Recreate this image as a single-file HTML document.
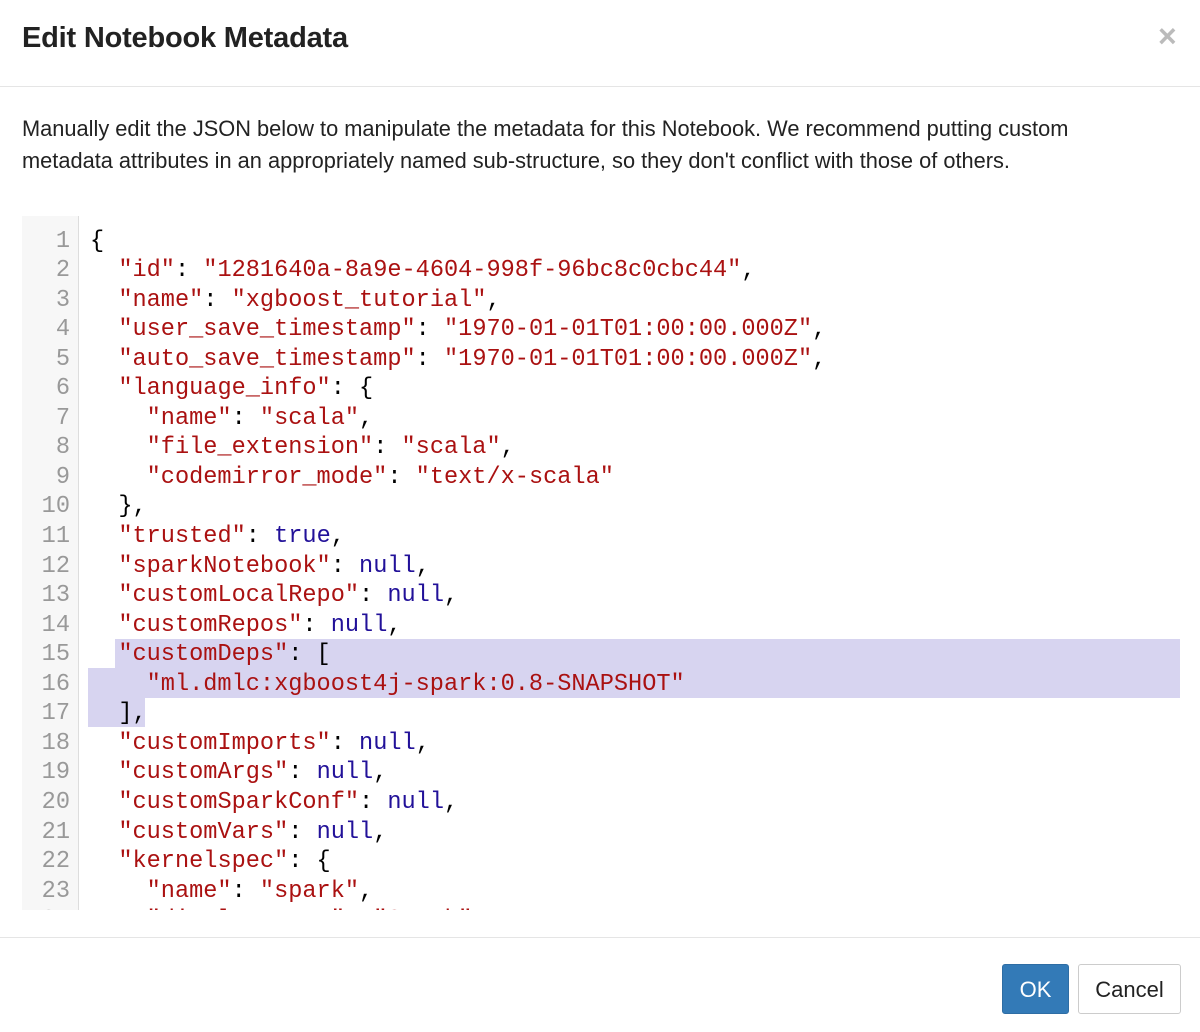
<!DOCTYPE html>
<html><head><style>
body{margin:0;width:1200px;height:1032px;background:#fff;position:relative;overflow:hidden;font-family:"Liberation Sans",sans-serif;color:#333}
.t{position:absolute;left:22px;top:22px;font-size:29px;font-weight:bold;color:#222;margin:0;letter-spacing:-0.2px}
.x{position:absolute;left:1158px;top:18px;font-size:32px;font-weight:bold;color:#bbb}
.hr{position:absolute;left:0;width:1200px;height:1px;background:#e5e5e5}
.p{position:absolute;left:22px;top:113px;font-size:21.8px;line-height:31.5px;color:#222;width:1110px}
.ed{position:absolute;left:22px;top:216px;width:1158px;height:694px;overflow:hidden;background:#fff}
.g{position:absolute;left:0;top:0;width:56px;height:694px;background:#f7f7f7;border-right:1px solid #ddd}
.l{position:absolute;left:0;height:29.55px;line-height:29.55px;font-family:"Liberation Mono",monospace;font-size:23.6px;white-space:pre}
.n{width:48px;text-align:right;color:#999}
.c{left:68px;color:#000}
.s{color:#a11}.a{color:#219}
.hl{position:absolute;background:#d7d4f0}
.b{position:absolute;top:964px;height:50px;font-size:22px;line-height:50px;text-align:center;border-radius:3px;box-sizing:border-box}
</style></head><body>
<h1 class="t">Edit Notebook Metadata</h1>
<div class="x">×</div>
<div class="hr" style="top:86px"></div>
<div class="p">Manually edit the JSON below to manipulate the metadata for this Notebook. We recommend putting custom metadata attributes in an appropriately named sub-structure, so they don't conflict with those of others.</div>
<div class="ed">
<div class="g"></div>
<div class="hl" style="left:93px;top:423px;width:1065px;height:29.5px"></div>
<div class="hl" style="left:66px;top:452px;width:1092px;height:29.5px"></div>
<div class="hl" style="left:66px;top:481px;width:57px;height:29.5px"></div>
<div id="code"></div>
</div>
<script>
var L=[
'{',
'  <s>"id"</s>: <s>"1281640a-8a9e-4604-998f-96bc8c0cbc44"</s>,',
'  <s>"name"</s>: <s>"xgboost_tutorial"</s>,',
'  <s>"user_save_timestamp"</s>: <s>"1970-01-01T01:00:00.000Z"</s>,',
'  <s>"auto_save_timestamp"</s>: <s>"1970-01-01T01:00:00.000Z"</s>,',
'  <s>"language_info"</s>: {',
'    <s>"name"</s>: <s>"scala"</s>,',
'    <s>"file_extension"</s>: <s>"scala"</s>,',
'    <s>"codemirror_mode"</s>: <s>"text/x-scala"</s>',
'  },',
'  <s>"trusted"</s>: <a>true</a>,',
'  <s>"sparkNotebook"</s>: <a>null</a>,',
'  <s>"customLocalRepo"</s>: <a>null</a>,',
'  <s>"customRepos"</s>: <a>null</a>,',
'  <s>"customDeps"</s>: [',
'    <s>"ml.dmlc:xgboost4j-spark:0.8-SNAPSHOT"</s>',
'  ],',
'  <s>"customImports"</s>: <a>null</a>,',
'  <s>"customArgs"</s>: <a>null</a>,',
'  <s>"customSparkConf"</s>: <a>null</a>,',
'  <s>"customVars"</s>: <a>null</a>,',
'  <s>"kernelspec"</s>: {',
'    <s>"name"</s>: <s>"spark"</s>,',
'    <s>"display_name"</s>: <s>"Spark"</s>'];
var h='';
L.forEach(function(t,i){var y=(10.5+i*29.55).toFixed(2);
t=t.replace(/<s>/g,'<span class="s">').replace(/<a>/g,'<span class="a">').replace(/<\/[sa]>/g,'</span>');
h+='<div class="l n" style="top:'+y+'px">'+(i+1)+'</div><div class="l c" style="top:'+y+'px">'+t+'</div>';});
document.getElementById('code').innerHTML=h;
</script>
<div class="hr" style="top:937px"></div>
<div class="b" style="left:1002px;width:67px;background:#337ab7;border:1px solid #2e6da4;color:#fff">OK</div>
<div class="b" style="left:1078px;width:103px;background:#fff;border:1px solid #ccc;color:#222">Cancel</div>
</body></html>
